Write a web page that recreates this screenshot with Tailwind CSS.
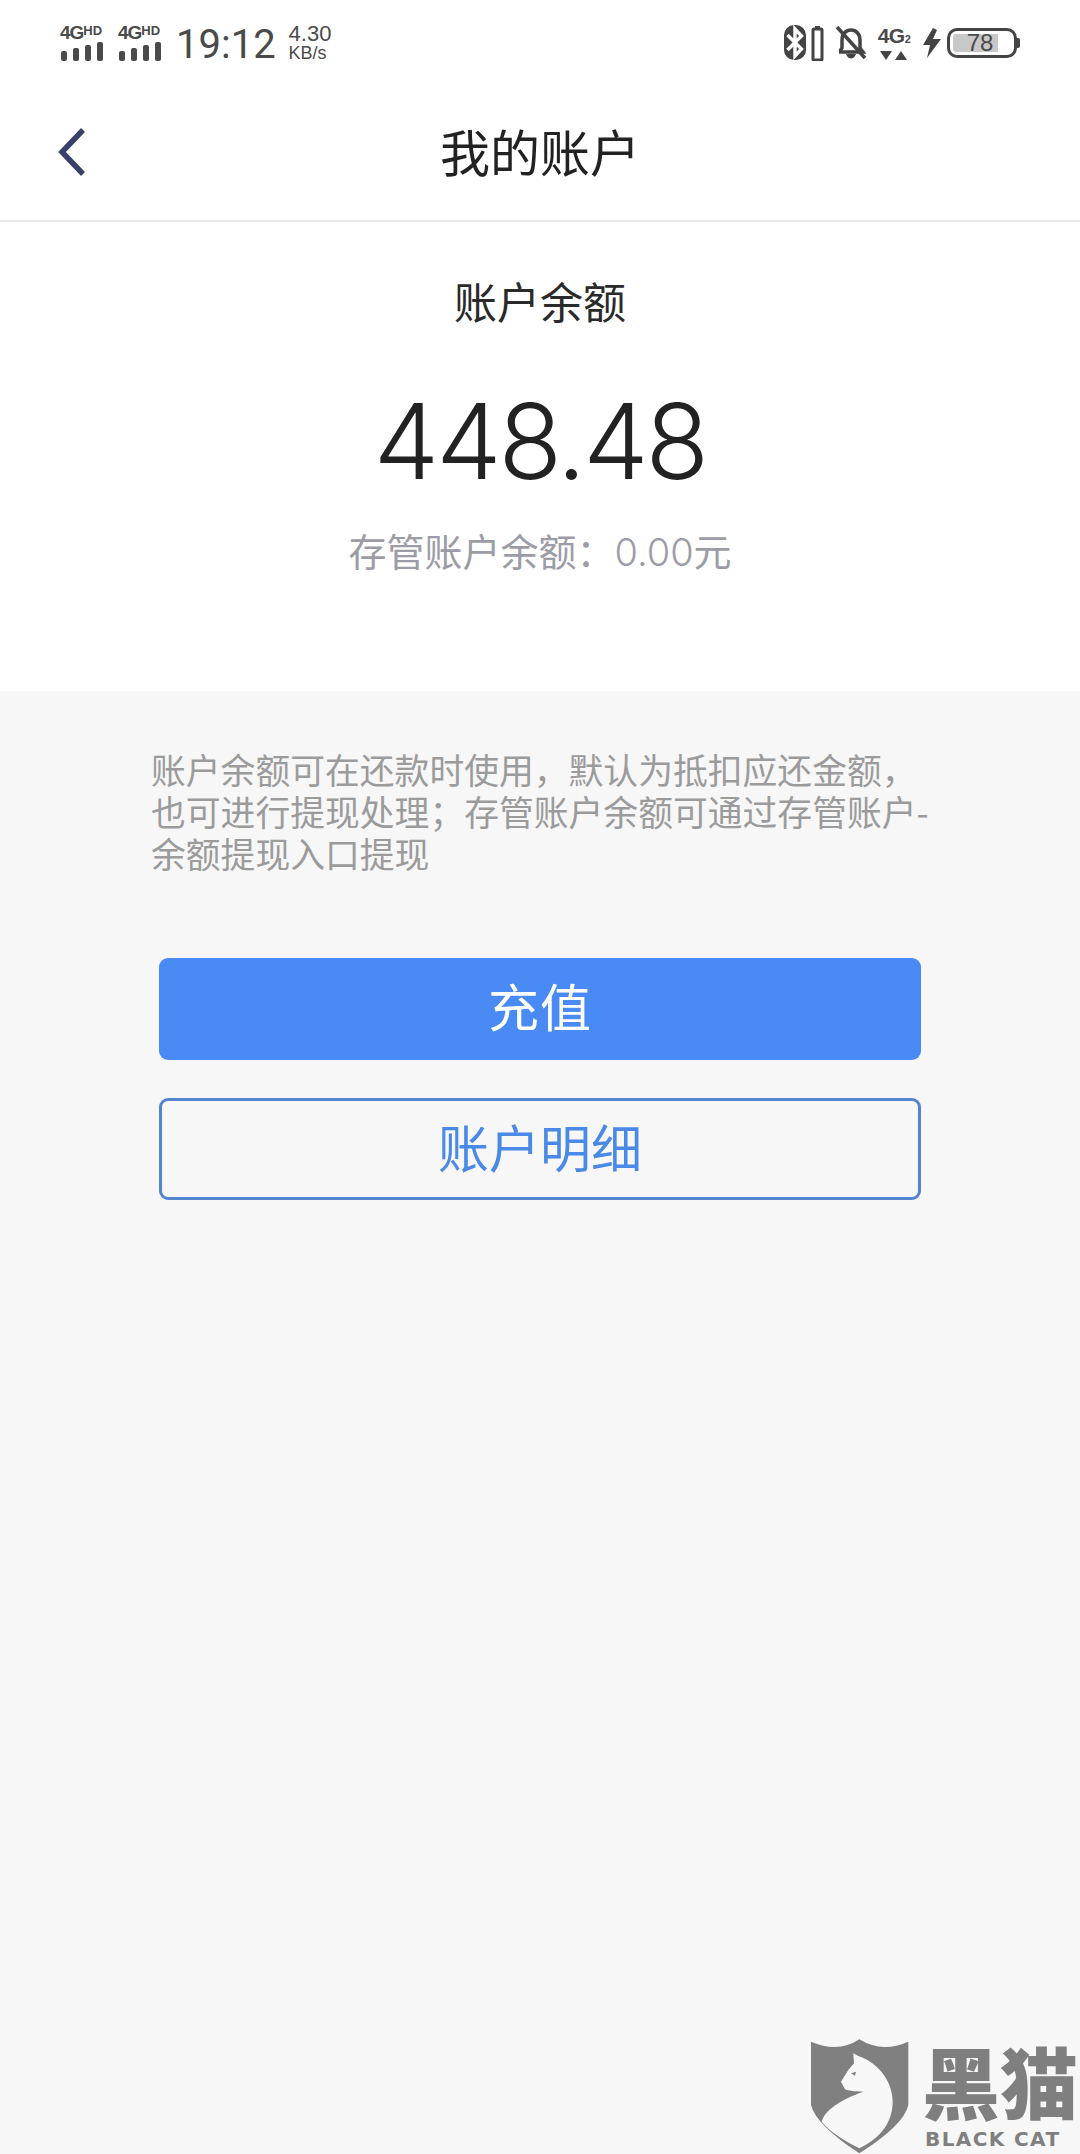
<!DOCTYPE html>
<html lang="zh">
<head>
<meta charset="utf-8">
<script src="https://cdn.jsdelivr.net/npm/@tailwindcss/browser@4"></script>
</head>
<body class="m-0">
<div class="relative w-[1080px] h-[2154px] overflow-hidden bg-[#f7f7f8] font-['Noto_Sans_CJK_SC','Noto_Sans_CJK_SC',sans-serif]">
  <div class="bg-white">
    <div class="flex items-center justify-between h-[85px] pl-[60px] pr-[60px] text-[#4a4a4a] font-['Liberation_Sans',sans-serif]">
      <div class="flex items-center">
        <div class="flex flex-col w-[46px] mr-[12px]">
          <span class="text-[19px] leading-[17px] font-bold tracking-[-1px] whitespace-nowrap">4G<span class="text-[13px] align-top leading-[14px] tracking-[0px]">HD</span></span>
          <svg width="46" height="20" viewBox="0 0 46 20" fill="#4a4a4a"><rect x="1" y="10" width="6" height="10" rx="2"/><rect x="13" y="7" width="6" height="13" rx="2"/><rect x="25" y="4" width="6" height="16" rx="2"/><rect x="37" y="1" width="6" height="19" rx="2"/></svg>
        </div>
        <div class="flex flex-col w-[46px] mr-[12px]">
          <span class="text-[19px] leading-[17px] font-bold tracking-[-1px] whitespace-nowrap">4G<span class="text-[13px] align-top leading-[14px] tracking-[0px]">HD</span></span>
          <svg width="46" height="20" viewBox="0 0 46 20" fill="#4a4a4a"><rect x="1" y="10" width="6" height="10" rx="2"/><rect x="13" y="7" width="6" height="13" rx="2"/><rect x="25" y="4" width="6" height="16" rx="2"/><rect x="37" y="1" width="6" height="19" rx="2"/></svg>
        </div>
        <span class="text-[40px] leading-none mr-[13px] mt-[4px] font-['Roboto',sans-serif]">19:12</span>
        <div class="flex flex-col items-start">
          <span class="text-[22px] leading-[21px]">4.30</span>
          <span class="text-[18px] leading-[18px]">KB/s</span>
        </div>
      </div>
      <div class="flex items-center">
        <svg width="40" height="36" viewBox="0 0 40 36" class="mr-[11px]">
          <rect x="0" y="0" width="22" height="35" rx="10" fill="#444"/>
          <path d="M3.5 10 L17.5 24 L11 31 L11 4 L17.5 11 L3.5 25" fill="none" stroke="#fff" stroke-width="3.4"/>
          <rect x="29" y="4" width="9" height="31" rx="1" fill="#fff" stroke="#444" stroke-width="3"/>
          <rect x="31" y="1" width="5" height="3" fill="#444"/>
        </svg>
        <svg width="32" height="36" viewBox="0 0 32 36" class="mr-[10px]" fill="none" stroke="#444">
          <path d="M5 26 L7 23 V15 C7 9 11 5 16 5 C21 5 25 9 25 15 V23 L28 27 H4" stroke-width="3.5"/>
          <path d="M11 29 C13 35 19 35 21 29 Z" fill="#444" stroke="none"/>
          <path d="M2 2 L30 33" stroke-width="3.5"/>
        </svg>
        <div class="flex flex-col items-center w-[34px] mr-[11px]">
          <span class="text-[21px] leading-[21px] font-bold tracking-[-0.5px] whitespace-nowrap">4G<span class="text-[11px]">2</span></span>
          <svg width="28" height="11" viewBox="0 0 28 11" fill="#444"><path d="M0 1 H12 L6 10 Z"/><path d="M15 10 H27 L21 1 Z"/></svg>
        </div>
        <svg width="20" height="30" viewBox="0 0 20 30" fill="#444" class="mr-[5px]"><path d="M11 0 L1 17 H8 L5 30 L19 11 H11 L15 2 Z"/></svg>
        <div class="flex items-center">
          <div class="relative w-[70px] h-[30px] rounded-[10px] border-[3px] border-[#444] p-[3px]">
            <div class="h-full w-[45px] bg-[#c8c8c8] flex items-center justify-center text-[24px] leading-none rounded-l-[3px] pl-[9px]">78</div>
          </div>
          <div class="w-[3px] h-[10px] bg-[#444] rounded-r-[2px]"></div>
        </div>
      </div>
    </div>
    <div class="relative flex items-center justify-center h-[137px] border-b-2 border-[#e8e8ea] text-[#222]">
      <svg width="32" height="50" viewBox="0 0 32 50" class="absolute left-[57px] top-[42px]" fill="none" stroke="#38406a" stroke-width="5.5"><path d="M26 3 L5 25 L26 47"/></svg>
      <span class="text-[50px] leading-none mb-[6px]">我的账户</span>
    </div>
    <div class="flex flex-col items-center h-[469px] pt-[55px]">
      <span class="text-[43px] leading-[46px] text-[#2a2a2a]">账户余额</span>
      <span class="mt-[63px] text-[104px] leading-[110px] text-[#222] font-['Inter',sans-serif] font-light tracking-[-3px]">448.48</span>
      <span class="mt-[32px] text-[38px] leading-[44px] text-[#9c9ca6]">存管账户余额：<span class="font-['Inter',sans-serif] font-light tracking-[0px]">0.00</span>元</span>
    </div>
  </div>
  <div class="pl-[151px] pr-[120px] pt-[57px] text-[34.8px] leading-[42px] text-[#9b9b9b]">
    <p>账户余额可在还款时使用，默认为抵扣应还金额，<br>也可进行提现处理；存管账户余额可通过存管账户-<br>余额提现入口提现</p>
  </div>
  <div class="flex flex-col gap-[38px] px-[159px] mt-[84px]">
    <div class="flex items-center justify-center h-[102px] rounded-[9px] bg-[#4a8af4] text-white text-[51px] leading-none tracking-[1px] pb-[8px]">充值</div>
    <div class="flex items-center justify-center h-[102px] rounded-[9px] border-[3px] border-[#5585d0] text-[#4a8ae6] text-[51px] leading-none pb-[6px]">账户明细</div>
  </div>
  <div class="absolute left-[811px] top-[2039px] w-[269px] h-[115px]">
    <svg width="98" height="115" viewBox="93 57 294 345" class="absolute left-0 top-0">
      <path d="M93 65 Q175 100 238 58 Q305 100 385 65 L385 255 Q372 315 238 400 Q108 315 93 255 Z" fill="#808080"/>
      <path d="M220 100 L235 108 C300 130 340 190 338 250 C335 320 290 360 238 385 C190 360 150 335 125 305 C135 270 180 240 250 215 C225 215 205 212 195 208 L183 185 L205 150 L222 130 Z" fill="#f7f7f8"/>
      <path d="M213 160 L228 155 L225 167 Z" fill="#808080"/>
    </svg>
    <div class="absolute left-[111px] top-[2px] text-[78px] leading-[78px] font-black text-[#7f7f7f] whitespace-nowrap">黑猫</div>
    <div class="absolute left-[114px] top-[88px] text-[20px] leading-[24px] font-bold text-[#808080] tracking-[1.4px] whitespace-nowrap font-['DejaVu_Sans',sans-serif]">BLACK CAT</div>
  </div>
</div>
</body>
</html>
